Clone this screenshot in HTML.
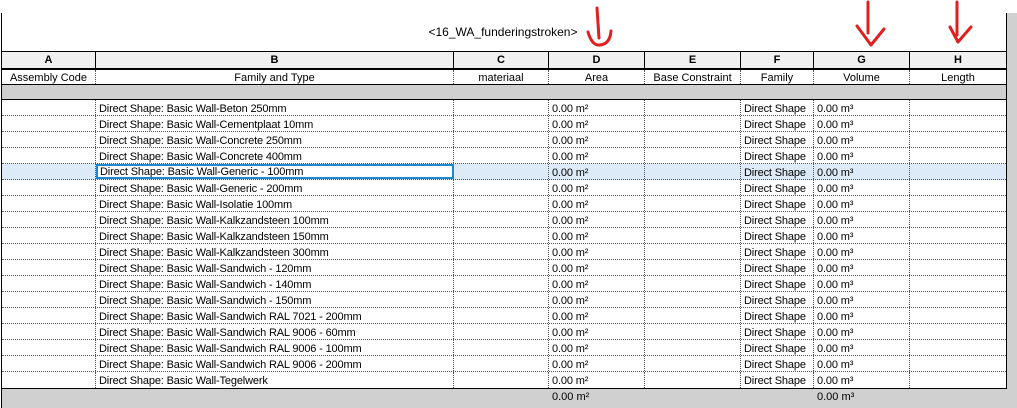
<!DOCTYPE html>
<html><head><meta charset="utf-8"><style>
*{margin:0;padding:0;box-sizing:border-box}
body{width:1017px;height:408px;background:#fff;position:relative;overflow:hidden;font-family:"Liberation Sans",Arial,sans-serif;font-size:11px;color:#000}
.abs{position:absolute}
.row{position:absolute;left:2px;width:1004px;height:16px;display:flex;border-bottom:1px dotted #555}
.row div{height:15px;border-right:1px dotted #555;line-height:15px;padding-top:2px;padding-left:3px;white-space:nowrap;overflow:hidden;letter-spacing:-0.15px}
.row div:last-child{border-right:none}
.c1{width:94px}.c2{width:358px}.c3{width:95px}.c4{width:96px}.c5{width:96px}.c6{width:73px}.c7{width:96px}.c8{width:96px}
.hd div{text-align:center;padding-left:0;padding-top:1px;letter-spacing:0}
</style></head><body>
<div class="abs" style="left:1006px;top:13px;width:11px;height:395px;background:#d0d0d0"></div>
<div class="abs" style="left:2px;top:389px;width:1004px;height:19px;background:#d0d0d0"></div>
<div class="abs" style="left:1px;top:13px;width:1px;height:395px;background:#000"></div>
<div class="abs" style="left:1006px;top:13px;width:1px;height:376px;background:#000"></div>
<div class="abs" style="left:0;top:25px;width:1006px;text-align:center;font-size:12px">&lt;16_WA_funderingstroken&gt;</div>
<div class="abs" style="left:2px;top:51px;width:1004px;height:1px;background:#000"></div>
<div class="row hd" style="top:52px;height:16px;background:#f0f0f0;border-bottom:none;font-weight:bold">
<div class="c1" style="border-right:1px solid #000;height:16px">A</div><div class="c2" style="border-right:1px solid #000;height:16px">B</div><div class="c3" style="border-right:1px solid #000;height:16px">C</div><div class="c4" style="border-right:1px solid #000;height:16px">D</div><div class="c5" style="border-right:1px solid #000;height:16px">E</div><div class="c6" style="border-right:1px solid #000;height:16px">F</div><div class="c7" style="border-right:1px solid #000;height:16px">G</div><div class="c8">H</div></div>
<div class="abs" style="left:2px;top:68px;width:1004px;height:2px;background:#000"></div>
<div class="row hd" style="top:70px;height:15px;border-bottom:1px solid #000">
<div class="c1" style="height:14px;line-height:14px">Assembly Code</div><div class="c2" style="height:14px;line-height:14px">Family and Type</div><div class="c3" style="height:14px;line-height:14px">materiaal</div><div class="c4" style="height:14px;line-height:14px">Area</div><div class="c5" style="height:14px;line-height:14px">Base Constraint</div><div class="c6" style="height:14px;line-height:14px">Family</div><div class="c7" style="height:14px;line-height:14px">Volume</div><div class="c8" style="height:14px;line-height:14px">Length</div></div>
<div class="abs" style="left:2px;top:85px;width:1004px;height:15px;background:#d0d0d0;border-bottom:1px solid #000"></div>

<div class="row" style="top:100px"><div class="c1"></div><div class="c2">Direct Shape: Basic Wall-Beton 250mm</div><div class="c3"></div><div class="c4">0.00 m²</div><div class="c5"></div><div class="c6">Direct Shape</div><div class="c7">0.00 m³</div><div class="c8"></div></div>
<div class="row" style="top:116px"><div class="c1"></div><div class="c2">Direct Shape: Basic Wall-Cementplaat 10mm</div><div class="c3"></div><div class="c4">0.00 m²</div><div class="c5"></div><div class="c6">Direct Shape</div><div class="c7">0.00 m³</div><div class="c8"></div></div>
<div class="row" style="top:132px"><div class="c1"></div><div class="c2">Direct Shape: Basic Wall-Concrete 250mm</div><div class="c3"></div><div class="c4">0.00 m²</div><div class="c5"></div><div class="c6">Direct Shape</div><div class="c7">0.00 m³</div><div class="c8"></div></div>
<div class="row" style="top:148px"><div class="c1"></div><div class="c2">Direct Shape: Basic Wall-Concrete 400mm</div><div class="c3"></div><div class="c4">0.00 m²</div><div class="c5"></div><div class="c6">Direct Shape</div><div class="c7">0.00 m³</div><div class="c8"></div></div>
<div class="row" style="top:164px;background:#dcebf7"><div class="c1"></div><div class="c2" style="border:2px solid #1e88d0;background:#fff;line-height:12px;padding-top:0;padding-left:2px">Direct Shape: Basic Wall-Generic - 100mm</div><div class="c3"></div><div class="c4">0.00 m²</div><div class="c5"></div><div class="c6">Direct Shape</div><div class="c7">0.00 m³</div><div class="c8"></div></div>
<div class="row" style="top:180px"><div class="c1"></div><div class="c2">Direct Shape: Basic Wall-Generic - 200mm</div><div class="c3"></div><div class="c4">0.00 m²</div><div class="c5"></div><div class="c6">Direct Shape</div><div class="c7">0.00 m³</div><div class="c8"></div></div>
<div class="row" style="top:196px"><div class="c1"></div><div class="c2">Direct Shape: Basic Wall-Isolatie 100mm</div><div class="c3"></div><div class="c4">0.00 m²</div><div class="c5"></div><div class="c6">Direct Shape</div><div class="c7">0.00 m³</div><div class="c8"></div></div>
<div class="row" style="top:212px"><div class="c1"></div><div class="c2">Direct Shape: Basic Wall-Kalkzandsteen 100mm</div><div class="c3"></div><div class="c4">0.00 m²</div><div class="c5"></div><div class="c6">Direct Shape</div><div class="c7">0.00 m³</div><div class="c8"></div></div>
<div class="row" style="top:228px"><div class="c1"></div><div class="c2">Direct Shape: Basic Wall-Kalkzandsteen 150mm</div><div class="c3"></div><div class="c4">0.00 m²</div><div class="c5"></div><div class="c6">Direct Shape</div><div class="c7">0.00 m³</div><div class="c8"></div></div>
<div class="row" style="top:244px"><div class="c1"></div><div class="c2">Direct Shape: Basic Wall-Kalkzandsteen 300mm</div><div class="c3"></div><div class="c4">0.00 m²</div><div class="c5"></div><div class="c6">Direct Shape</div><div class="c7">0.00 m³</div><div class="c8"></div></div>
<div class="row" style="top:260px"><div class="c1"></div><div class="c2">Direct Shape: Basic Wall-Sandwich - 120mm</div><div class="c3"></div><div class="c4">0.00 m²</div><div class="c5"></div><div class="c6">Direct Shape</div><div class="c7">0.00 m³</div><div class="c8"></div></div>
<div class="row" style="top:276px"><div class="c1"></div><div class="c2">Direct Shape: Basic Wall-Sandwich - 140mm</div><div class="c3"></div><div class="c4">0.00 m²</div><div class="c5"></div><div class="c6">Direct Shape</div><div class="c7">0.00 m³</div><div class="c8"></div></div>
<div class="row" style="top:292px"><div class="c1"></div><div class="c2">Direct Shape: Basic Wall-Sandwich - 150mm</div><div class="c3"></div><div class="c4">0.00 m²</div><div class="c5"></div><div class="c6">Direct Shape</div><div class="c7">0.00 m³</div><div class="c8"></div></div>
<div class="row" style="top:308px"><div class="c1"></div><div class="c2">Direct Shape: Basic Wall-Sandwich RAL 7021 - 200mm</div><div class="c3"></div><div class="c4">0.00 m²</div><div class="c5"></div><div class="c6">Direct Shape</div><div class="c7">0.00 m³</div><div class="c8"></div></div>
<div class="row" style="top:324px"><div class="c1"></div><div class="c2">Direct Shape: Basic Wall-Sandwich RAL 9006 - 60mm</div><div class="c3"></div><div class="c4">0.00 m²</div><div class="c5"></div><div class="c6">Direct Shape</div><div class="c7">0.00 m³</div><div class="c8"></div></div>
<div class="row" style="top:340px"><div class="c1"></div><div class="c2">Direct Shape: Basic Wall-Sandwich RAL 9006 - 100mm</div><div class="c3"></div><div class="c4">0.00 m²</div><div class="c5"></div><div class="c6">Direct Shape</div><div class="c7">0.00 m³</div><div class="c8"></div></div>
<div class="row" style="top:356px"><div class="c1"></div><div class="c2">Direct Shape: Basic Wall-Sandwich RAL 9006 - 200mm</div><div class="c3"></div><div class="c4">0.00 m²</div><div class="c5"></div><div class="c6">Direct Shape</div><div class="c7">0.00 m³</div><div class="c8"></div></div>
<div class="row" style="top:372px;border-bottom:1px solid #000;height:17px"><div class="c1" style="height:16px"></div><div class="c2" style="height:16px">Direct Shape: Basic Wall-Tegelwerk</div><div class="c3" style="height:16px"></div><div class="c4" style="height:16px">0.00 m²</div><div class="c5" style="height:16px"></div><div class="c6" style="height:16px">Direct Shape</div><div class="c7" style="height:16px">0.00 m³</div><div class="c8"></div></div>
<div class="abs" style="left:552px;top:391px">0.00 m²</div>
<div class="abs" style="left:817px;top:391px">0.00 m³</div>

<svg class="abs" style="left:0;top:0" width="1017" height="60" fill="none" stroke="#e02020" stroke-width="3" stroke-linecap="round" stroke-linejoin="round">
<path d="M597 8 Q598 24 599 38"/>
<path d="M588 32 Q592 46 600 45 Q610 44 611 31"/>
<path d="M868 2 L868 33"/>
<path d="M857 26 L871 45 L884 29"/>
<path d="M957 2 L957 35"/>
<path d="M950 27 L958 42 L971 27"/>
</svg>
</body></html>
